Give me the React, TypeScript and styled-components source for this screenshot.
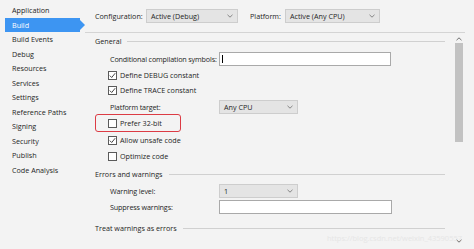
import React from "react";
import styled, { createGlobalStyle } from "styled-components";

const Global = createGlobalStyle`
  html, body { margin: 0; padding: 0; background: #f3f3f3; }
  body { font-family: "Open Sans", "Noto Sans", sans-serif; font-size: 7.2px; color: #1e1e1e; }
  * { box-sizing: border-box; }
`;

const Page = styled.div`
  width: 474px;
  height: 249px;
  display: flex;
  background: #f3f3f3;
  overflow: hidden;
  position: relative;
`;

const Sidebar = styled.nav`
  width: 85px;
  flex: none;
  display: flex;
  flex-direction: column;
  padding-top: 3px;
`;

const NavItem = styled.div<{ $active?: boolean }>`
  position: relative;
  height: 14.5px;
  line-height: 14.5px;
  margin-left: 5px;
  margin-right: ${(p) => (p.$active ? "5px" : "0")};
  padding-left: 7px;
  white-space: nowrap;
  background: ${(p) => (p.$active ? "#3d95f2" : "transparent")};
  color: ${(p) => (p.$active ? "#ffffff" : "#1e1e1e")};
  &::after {
    content: "";
    display: ${(p) => (p.$active ? "block" : "none")};
    position: absolute;
    right: -5px;
    top: 2.25px;
    border-left: 5px solid #3d95f2;
    border-top: 5px solid transparent;
    border-bottom: 5px solid transparent;
  }
`;

const Main = styled.div`
  flex: 1;
  display: flex;
  flex-direction: column;
  padding-right: 9px;
`;

const TopBar = styled.div`
  height: 33px;
  display: flex;
  align-items: center;
  padding-left: 10px;
  border-bottom: 1px solid #d4d4d4;
  flex: none;
`;

const TopLabel = styled.span<{ $w: number; $ml?: number }>`
  width: ${(p) => p.$w}px;
  margin-left: ${(p) => p.$ml ?? 0}px;
  white-space: nowrap;
`;

const Select = styled.div<{ $w: number }>`
  width: ${(p) => p.$w}px;
  height: 14px;
  background: #e4e4e4;
  border: 1px solid #cdcdcd;
  display: flex;
  align-items: center;
  justify-content: space-between;
  padding: 0 4px 0 4px;
  white-space: nowrap;
`;

const Chevron = () => (
  <svg width="6" height="4" viewBox="0 0 6 4">
    <path d="M0.5 0.8 L3 3.2 L5.5 0.8" fill="none" stroke="#7a7a7a" strokeWidth="0.9" />
  </svg>
);

const Body = styled.div`
  flex: 1;
  display: flex;
`;

const Content = styled.div`
  flex: 1;
  display: flex;
  flex-direction: column;
  padding-left: 10px;
  padding-right: 8px;
  position: relative;
`;

const Row = styled.div<{ $mt: number; $indent?: number }>`
  height: 14px;
  margin-top: ${(p) => p.$mt}px;
  padding-left: ${(p) => p.$indent ?? 0}px;
  display: flex;
  align-items: center;
  white-space: nowrap;
  position: relative;
`;

const SectionLine = styled.div`
  flex: 1;
  height: 1px;
  background: #d0d0d0;
  margin-left: 6px;
`;

const FieldLabel = styled.span`
  width: 109px;
  flex: none;
  letter-spacing: -0.14px;
`;

const TextInput = styled.div<{ $w: number }>`
  width: ${(p) => p.$w}px;
  height: 13.5px;
  background: #ffffff;
  border: 1px solid #a9a9a9;
  display: flex;
  align-items: center;
  padding-left: 2px;
`;

const Caret = styled.span`
  width: 1px;
  height: 8px;
  background: #000;
`;

const Box = styled.span`
  width: 9px;
  height: 9px;
  flex: none;
  background: #fff;
  border: 1px solid #5a5a5a;
  margin-right: 3px;
  display: flex;
  align-items: center;
  justify-content: center;
`;

const Highlight = styled.div`
  position: absolute;
  left: 0;
  top: -2px;
  width: 86px;
  height: 18px;
  border: 1.5px solid #dc3b44;
  border-radius: 3px;
  pointer-events: none;
`;

const Check = ({ on }: { on?: boolean }) => (
  <Box>
    {on && (
      <svg width="7" height="7" viewBox="0 0 7 7">
        <path d="M0.8 3.6 L2.7 5.5 L6.2 1.2" fill="none" stroke="#333" strokeWidth="0.9" />
      </svg>
    )}
  </Box>
);

const ScrollBar = styled.div`
  width: 12px;
  flex: none;
  display: flex;
  flex-direction: column;
  align-items: center;
  padding-top: 4px;
  padding-bottom: 6px;
`;

const Thumb = styled.div`
  width: 8px;
  height: 99px;
  background: #c2c2c2;
  margin-top: 2px;
`;

const Spacer = styled.div`
  flex: 1;
`;

const Watermark = styled.div`
  position: absolute;
  right: 12px;
  bottom: 6px;
  color: #e6e6e6;
  font-size: 7.5px;
`;

const navItems = [
  "Application",
  "Build",
  "Build Events",
  "Debug",
  "Resources",
  "Services",
  "Settings",
  "Reference Paths",
  "Signing",
  "Security",
  "Publish",
  "Code Analysis",
];

export default function App() {
  return (
    <Page>
      <Global />
      <Sidebar>
        {navItems.map((n) => (
          <NavItem key={n} $active={n === "Build"}>
            {n}
          </NavItem>
        ))}
      </Sidebar>
      <Main>
        <TopBar>
          <TopLabel $w={51}>Configuration:</TopLabel>
          <Select $w={92}>
            <span>Active (Debug)</span>
            <Chevron />
          </Select>
          <TopLabel $w={35} $ml={12}>
            Platform:
          </TopLabel>
          <Select $w={95}>
            <span>Active (Any CPU)</span>
            <Chevron />
          </Select>
        </TopBar>
        <Body>
          <Content>
            <Row $mt={1}>
              General
              <SectionLine />
            </Row>
            <Row $mt={4} $indent={15}>
              <FieldLabel>Conditional compilation symbols:</FieldLabel>
              <TextInput $w={172}>
                <Caret />
              </TextInput>
            </Row>
            <Row $mt={2} $indent={13}>
              <Check on />
              Define DEBUG constant
            </Row>
            <Row $mt={1} $indent={13}>
              <Check on />
              Define TRACE constant
            </Row>
            <Row $mt={3} $indent={15}>
              <FieldLabel>Platform target:</FieldLabel>
              <Select $w={79}>
                <span>Any CPU</span>
                <Chevron />
              </Select>
            </Row>
            <Row $mt={2} $indent={13}>
              <Highlight />
              <Check />
              Prefer 32-bit
            </Row>
            <Row $mt={3} $indent={13}>
              <Check on />
              Allow unsafe code
            </Row>
            <Row $mt={2} $indent={13}>
              <Check />
              Optimize code
            </Row>
            <Row $mt={4}>
              Errors and warnings
              <SectionLine />
            </Row>
            <Row $mt={3} $indent={15}>
              <FieldLabel>Warning level:</FieldLabel>
              <Select $w={79}>
                <span>1</span>
                <Chevron />
              </Select>
            </Row>
            <Row $mt={2} $indent={15}>
              <FieldLabel>Suppress warnings:</FieldLabel>
              <TextInput $w={173} />
            </Row>
            <Row $mt={7}>
              Treat warnings as errors
              <SectionLine />
            </Row>
          </Content>
          <ScrollBar>
            <svg width="6" height="4" viewBox="0 0 6 4">
              <path d="M0.5 3.2 L3 0.8 L5.5 3.2" fill="none" stroke="#606060" strokeWidth="0.9" />
            </svg>
            <Thumb />
            <Spacer />
            <svg width="6" height="4" viewBox="0 0 6 4">
              <path d="M0.5 0.8 L3 3.2 L5.5 0.8" fill="none" stroke="#606060" strokeWidth="0.9" />
            </svg>
          </ScrollBar>
        </Body>
      </Main>
      <Watermark>https://blog.csdn.net/weixin_43590557</Watermark>
    </Page>
  );
}
